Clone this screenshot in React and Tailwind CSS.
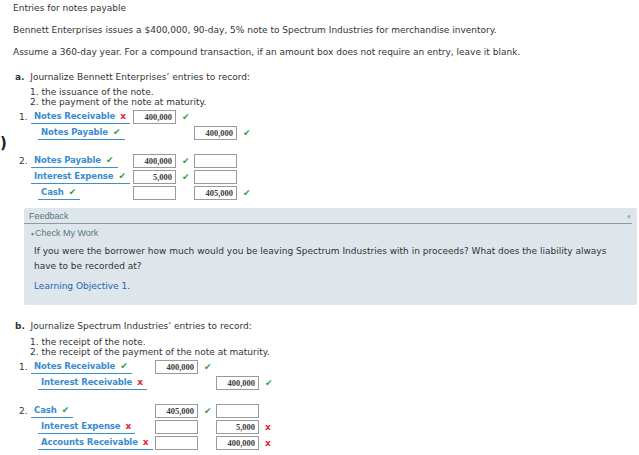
import React from "react";

const SANS = { fontFamily: '"DejaVu Sans", Verdana, sans-serif' };

function Check() {
  return <span className="text-[9px] leading-none text-[#2e9e3a]" style={SANS}>✔</span>;
}
function Cross() {
  return <span className="text-[9px] font-bold leading-none text-[#e5262b]" style={SANS}>x</span>;
}
function Mark({ m }) {
  if (m === "c") return <Check />;
  if (m === "x") return <Cross />;
  return null;
}

function Box({ v }) {
  return (
    <div
      className="w-[43px] h-[14px] border border-[#9a9a9a] bg-white text-right pr-[3px] text-[8.5px] font-bold leading-[12px] text-[#3a3a3a]"
      style={{ fontFamily: '"Liberation Serif", "Times New Roman", serif' }}
    >
      {v}
    </div>
  );
}

function Cell({ v, m }) {
  return (
    <div className="flex items-center">
      {v === null ? <div className="w-[43px] h-[14px]" /> : <Box v={v} />}
      <div className="w-[18px] pl-[6px] flex items-center">
        <Mark m={m} />
      </div>
    </div>
  );
}

function Row({ num, name, mark, indent, d, dm, c, cm, acctW, mt }) {
  return (
    <div className={"flex items-end h-[14px] " + (mt || "mt-[2px]")}>
      <div className="w-[18px] pl-[6px] text-[9px] leading-[14px] text-[#333]" style={SANS}>
        {num ? num + "." : ""}
      </div>
      <div className={acctW + " h-[14px] flex items-end"}>
        <div
          className={
            "flex items-center gap-[5px] border-b-[1.5px] border-[#3f8fcf] h-[14px] pr-[4px] " +
            (indent ? "ml-[7px] pl-[3px]" : "pl-[3px]")
          }
        >
          <span
            className="text-[8.5px] font-bold leading-none text-[#3b8bd0] tracking-[-0.1px]"
            style={SANS}
          >
            {name}
          </span>
          <Mark m={mark} />
        </div>
      </div>
      <Cell v={d} m={dm} />
      <Cell v={c} m={cm} />
    </div>
  );
}

export default function App() {
  return (
    <div className="relative w-[639px] h-[455px] bg-white text-[#333] overflow-hidden" style={SANS}>
      <span
        className="absolute left-[0px] top-[136px] text-[15px] font-bold leading-none text-[#222]"
        style={SANS}
      >
        )
      </span>
      <div className="px-[13px] pt-[3px] text-[9px] leading-[11px]">
        <p>Entries for notes payable</p>
        <p className="mt-[11px]">
          Bennett Enterprises issues a $400,000, 90-day, 5% note to Spectrum Industries for merchandise inventory.
        </p>
        <p className="mt-[11px]">
          Assume a 360-day year. For a compound transaction, if an amount box does not require an entry, leave it blank.
        </p>

        <p className="mt-[14px] pl-[2px]">
          <span className="font-bold">a.</span>&nbsp; Journalize Bennett Enterprises’ entries to record:
        </p>
        <div className="mt-[5px] pl-[17px] leading-[9.5px]">
          <p>1. the issuance of the note.</p>
          <p>2. the payment of the note at maturity.</p>
        </div>
      </div>

      <div className="pl-[13px] mt-[3px]">
        <Row num="1" name="Notes Receivable" mark="x" d="400,000" dm="c" c={null} acctW="w-[102px]" mt="mt-0" />
        <Row name="Notes Payable" mark="c" indent d={null} c="400,000" cm="c" acctW="w-[102px]" />
        <Row num="2" name="Notes Payable" mark="c" d="400,000" dm="c" c="" acctW="w-[102px]" mt="mt-[14px]" />
        <Row name="Interest Expense" mark="c" d="5,000" dm="c" c="" acctW="w-[102px]" />
        <Row name="Cash" mark="c" indent d="" c="405,000" cm="c" acctW="w-[102px]" />
      </div>

      <div className="ml-[24px] mr-[2px] mt-[8px] h-[97px] bg-[#dee6eb] rounded-[2px]">
        <div
          className="relative mr-[5px] h-[16px] border-b border-[#8e9ba1] pl-[5px] text-[9px] leading-[16px] text-[#56787c]"
          style={{ fontFamily: '"Liberation Sans", Arial, sans-serif' }}
        >
          Feedback
          <span className="absolute right-[0px] top-[1px] text-[6px] text-[#9aa5ab]">▼</span>
        </div>
        <div
          className="pl-[6px] mt-[2px] text-[9px] leading-[14px] text-[#56787c]"
          style={{ fontFamily: '"Liberation Sans", Arial, sans-serif' }}
        >
          <span className="text-[5px] align-middle">▼</span>Check My Work
        </div>
        <p className="pl-[10px] pr-[20px] mt-[3px] text-[9px] leading-[15px] text-[#333]">
          If you were the borrower how much would you be leaving Spectrum Industries with in proceeds? What does the liability always have to be recorded at?
        </p>
        <p className="pl-[10px] mt-[7px] text-[9px] leading-[11px]">
          <span className="text-[#1d63b8]">Learning Objective 1</span>.
        </p>
      </div>

      <div className="px-[13px] mt-[16px] text-[9px] leading-[11px]">
        <p className="pl-[2px]">
          <span className="font-bold">b.</span>&nbsp; Journalize Spectrum Industries’ entries to record:
        </p>
        <div className="mt-[6px] pl-[17px] leading-[9.5px]">
          <p>1. the receipt of the note.</p>
          <p>2. the receipt of the payment of the note at maturity.</p>
        </div>
      </div>

      <div className="pl-[13px] mt-[3px]">
        <Row num="1" name="Notes Receivable" mark="c" d="400,000" dm="c" c={null} acctW="w-[124px]" mt="mt-0" />
        <Row name="Interest Receivable" mark="x" indent d={null} c="400,000" cm="c" acctW="w-[124px]" />
        <Row num="2" name="Cash" mark="c" d="405,000" dm="c" c="" acctW="w-[124px]" mt="mt-[14px]" />
        <Row name="Interest Expense" mark="x" indent d="" c="5,000" cm="x" acctW="w-[124px]" />
        <Row name="Accounts Receivable" mark="x" indent d="" c="400,000" cm="x" acctW="w-[124px]" />
      </div>
    </div>
  );
}
